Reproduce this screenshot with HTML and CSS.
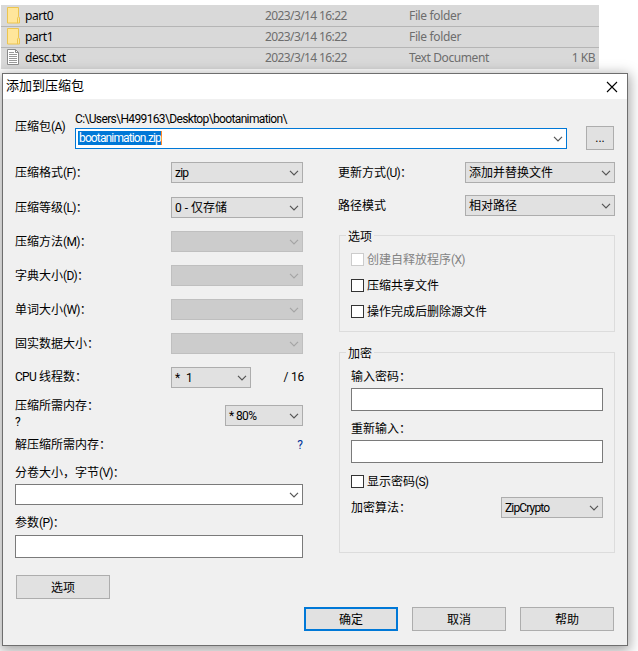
FILE: index.html
```html
<!DOCTYPE html>
<html lang="zh-CN">
<head>
<meta charset="utf-8">
<title>添加到压缩包</title>
<link rel="stylesheet" href="styles.css">
</head>
<body>
<svg class="defs" width="0" height="0">
  <symbol id="chev" viewBox="0 0 10 6"><path d="M1 .8 5 4.800 9 .8" fill="none" stroke="currentColor" stroke-width="1.2"/></symbol>
  <symbol id="folder" viewBox="0 0 14 17"><path d="M.5.5h11v9.200l1 1v5.300H.5z" fill="#ffe69b" stroke="#ecc54f"/><path d="M10.500 16v-4.800l1-1.500" fill="none" stroke="#ecc54f"/></symbol>
</svg>
<div class="files">
  <div class="file"><svg class="ficon" width="14" height="17"><use href="#folder"/></svg><span class="name">part0</span><span class="date">2023/3/14 16:22</span><span class="type">File folder</span><span class="size"></span></div>
  <div class="file"><svg class="ficon" width="14" height="17"><use href="#folder"/></svg><span class="name">part1</span><span class="date">2023/3/14 16:22</span><span class="type">File folder</span><span class="size"></span></div>
  <div class="file"><svg class="ficon" width="14" height="17" viewBox="0 0 14 17"><path d="M.5.5h8l3 3v12H.5z" fill="#fff" stroke="#8a8a8a"/><path d="M8.500.5v3h3" fill="none" stroke="#8a8a8a"/><path d="M2 3.500h5M2 5.500h8M2 7.500h8M2 9.500h8M2 11.500h8M2 13.500h8" stroke="#999"/></svg><span class="name">desc.txt</span><span class="date">2023/3/14 16:22</span><span class="type doc">Text Document</span><span class="size">1 KB</span></div>
</div>
<div class="dialog">
  <div class="titlebar"><span>添加到压缩包</span><svg width="12" height="12" viewBox="0 0 12 12"><path d="M1 1 11 11M11 1 1 11" stroke="#000" stroke-width="1.1"/></svg></div>
  <div class="archive">
    <div class="archive-label">压缩包<b>(A)</b></div>
    <div class="archive-main">
      <div class="path">C:\Users\H499163\Desktop\bootanimation\</div>
      <div class="combo focus"><span class="selected">bootanimation.zip</span><svg class="chev"><use href="#chev"/></svg></div>
    </div>
    <div class="button browse">...</div>
  </div>
  <div class="columns">
    <div class="left">
      <div class="row first"><span>压缩格式<b>(F)</b>：</span><div class="combo"><span class="zip">zip</span><svg class="chev"><use href="#chev"/></svg></div></div>
      <div class="row"><span>压缩等级<b>(L)</b>：</span><div class="combo"><span>0 - 仅存储</span><svg class="chev"><use href="#chev"/></svg></div></div>
      <div class="row"><span>压缩方法<b>(M)</b>：</span><div class="combo off"><svg class="chev"><use href="#chev"/></svg></div></div>
      <div class="row"><span>字典大小<b>(D)</b>：</span><div class="combo off"><svg class="chev"><use href="#chev"/></svg></div></div>
      <div class="row"><span>单词大小<b>(W)</b>：</span><div class="combo off"><svg class="chev"><use href="#chev"/></svg></div></div>
      <div class="row"><span>固实数据大小：</span><div class="combo off"><svg class="chev"><use href="#chev"/></svg></div></div>
      <div class="row cpu"><span><b>CPU</b> 线程数：</span><div class="combo"><span>*&nbsp; 1</span><svg class="chev"><use href="#chev"/></svg></div><span class="total">/ 16</span></div>
      <div class="memory"><div>压缩所需内存：<br>?</div><div class="combo"><span class="percent">* 80%</span><svg class="chev"><use href="#chev"/></svg></div></div>
      <div class="unpack"><span>解压缩所需内存：</span><span class="unknown">?</span></div>
      <div class="caption volume">分卷大小，字节<b>(V)</b>：</div>
      <div class="combo edit"><svg class="chev"><use href="#chev"/></svg></div>
      <div class="caption params">参数<b>(P)</b>：</div>
      <div class="input"></div>
      <div class="button options">选项</div>
    </div>
    <div class="right">
      <div class="row update"><span>更新方式<b>(U)</b>：</span><div class="combo"><span>添加并替换文件</span><svg class="chev"><use href="#chev"/></svg></div></div>
      <div class="row"><span>路径模式</span><div class="combo"><span>相对路径</span><svg class="chev"><use href="#chev"/></svg></div></div>
      <div class="group opts">
        <div class="legend">选项</div>
        <div class="check off-check"><i></i>创建自释放程序<b>(X)</b></div>
        <div class="check"><i></i>压缩共享文件</div>
        <div class="check"><i></i>操作完成后删除源文件</div>
      </div>
      <div class="group crypt">
        <div class="legend">加密</div>
        <div class="caption">输入密码：</div>
        <div class="input"></div>
        <div class="caption again">重新输入：</div>
        <div class="input"></div>
        <div class="check show"><i></i>显示密码<b>(S)</b></div>
        <div class="method"><span>加密算法：</span><div class="combo"><span class="tight">ZipCrypto</span><svg class="chev"><use href="#chev"/></svg></div></div>
      </div>
    </div>
  </div>
  <div class="actions"><div class="button ok">确定</div><div class="button">取消</div><div class="button">帮助</div></div>
</div>
</body>
</html>
```
FILE: styles.css
```css
* { box-sizing: border-box; }
body { margin: 0; width: 638px; height: 651px; overflow: hidden; background: #fff; padding: 5px 0 0 1px; font: 12px/20px Roboto, "Noto Sans CJK SC", sans-serif; color: #000; white-space: nowrap; }
b { font-weight: normal; letter-spacing: -.7px; }
.tight { letter-spacing: -.85px; }
.percent { letter-spacing: -.6px; }
.zip { letter-spacing: -.8px; }
.defs { display: block; position: absolute; }
.files { width: 598px; height: 64px; background: #d9d9d9; font-family: "Noto Sans", sans-serif; color: #6d6d6d; }
.file { display: flex; height: 22px; margin-bottom: -1px; line-height: 21px; border-bottom: 1px solid #b5b5b5; }
.file:last-child { border: 0; }
.ficon { margin: 2px 0 0 6px; flex: none; }
.name { width: 244px; padding-left: 4px; color: #000; letter-spacing: -.4px; flex: none; }
.date { width: 144px; letter-spacing: -.6px; flex: none; }
.type { width: 140px; letter-spacing: -.35px; flex: none; }
.doc { letter-spacing: -.4px; }
.size { flex: 1; text-align: right; padding-right: 4px; letter-spacing: -.5px; }
.dialog { width: 626px; height: 573px; margin: 4px 0 0 1px; border: 1px solid #6e6e6e; background: #f0f0f0; box-shadow: 0 3px 12px 2px rgba(0,0,0,.35); }
.titlebar { height: 25px; background: #fff; display: flex; align-items: center; justify-content: space-between; padding: 0 9px 0 3px; font-size: 13px; }
.titlebar span { margin-top: -2px; }
.archive { display: flex; height: 63px; padding-left: 12px; }
.archive-label { width: 60px; padding-top: 18px; }
.archive-main { width: 492px; padding-top: 10px; }
.path { height: 19px; letter-spacing: -.64px; }
.combo { height: 21px; border: 1px solid #adadad; background: #e1e1e1; display: flex; align-items: center; justify-content: space-between; padding: 0 3px 0 3px; line-height: 19px; flex: none; }
.combo span { padding-top: 2px; }
.chev { width: 10px; height: 6px; margin-left: auto; color: #555; flex: none; }
.combo.off { background: #ccc; border-color: #bfbfbf; }
.off .chev { color: #a5a5a5; }
.combo.focus, .combo.edit { background: #fff; border-color: #0078d7; }
.combo.edit { border-color: #7a7a7a; }
.combo.focus { padding-left: 2px; }
.combo .selected { height: 14px; line-height: 14px; padding: 0 0 0 1px; background: #0078d7; color: #fff; border-right: 1px solid #ff8728; letter-spacing: -.86px; margin-bottom: 2px; }
.button { width: 94px; height: 24px; border: 1px solid #adadad; background: #e1e1e1; text-align: center; line-height: 23px; }
.browse { width: 28px; margin: 27px 0 0 19px; }
.columns { display: flex; height: 445px; padding-left: 12px; }
.left { width: 288px; }
.row { display: flex; justify-content: space-between; height: 34px; line-height: 23px; }
.row.first { height: 35px; }
.row .combo { width: 132px; }
.row.cpu { height: 30px; line-height: 21px; }
.cpu .combo { width: 80px; margin-left: auto; }
.total { width: 53px; text-align: right; letter-spacing: -.2px; margin-right: -1px; }
.memory { height: 32px; line-height: 16px; display: flex; justify-content: space-between; }
.memory > div:first-child { padding-top: 1px; }
.memory .combo { width: 78px; margin-top: 8px; }
.unpack { display: flex; justify-content: space-between; height: 33px; padding-top: 6px; }
.unknown { color: #003399; }
.caption { height: 22px; }
.volume { padding-top: 1px; }
.params { height: 30px; padding-top: 8px; }
.input { height: 23px; background: #fff; border: 1px solid #7a7a7a; }
.options { margin: 17px 0 0 1px; }
.right { width: 276px; margin-left: 36px; }
.right .row > span { margin-left: -1px; }
.right .row .combo { width: 150px; }
.row.update { height: 33px; }
.group { border: 1px solid #dcdcdc; padding: 0 11px; }
.legend { width: 28px; margin-left: -5px; padding: 1px 0 0 2px; background: #f0f0f0; height: 20px; }
.opts { margin-top: 6px; height: 97px; }
.opts .legend { margin-top: -10px; }
.check { height: 26px; line-height: 26px; display: flex; align-items: center; }
.check i { width: 13px; height: 13px; border: 1px solid #333; background: #fff; margin-right: 3px; }
.off-check { color: #838383; }
.off-check i { border-color: #ccc; }
.opts .check i { margin-top: -1px; }
.opts .check:nth-child(2) { margin-top: 1px; }
.crypt { margin-top: 20px; height: 201px; }
.crypt .legend { margin-top: -10px; }
.crypt .caption { height: 22px; margin-top: 3px; padding-top: 1px; }
.crypt .again { margin-top: 7px; }
.show { margin-top: 6px; }
.show i { margin-top: -1px; }
.method { display: flex; justify-content: space-between; height: 21px; line-height: 22px; margin-top: 2px; }
.method .combo { width: 102px; }
.actions { display: flex; justify-content: flex-end; gap: 14px; padding-right: 13px; }
.actions .button, .options { line-height: 24px; }
.actions .ok { border: 2px solid #0078d7; line-height: 22px; }
```
